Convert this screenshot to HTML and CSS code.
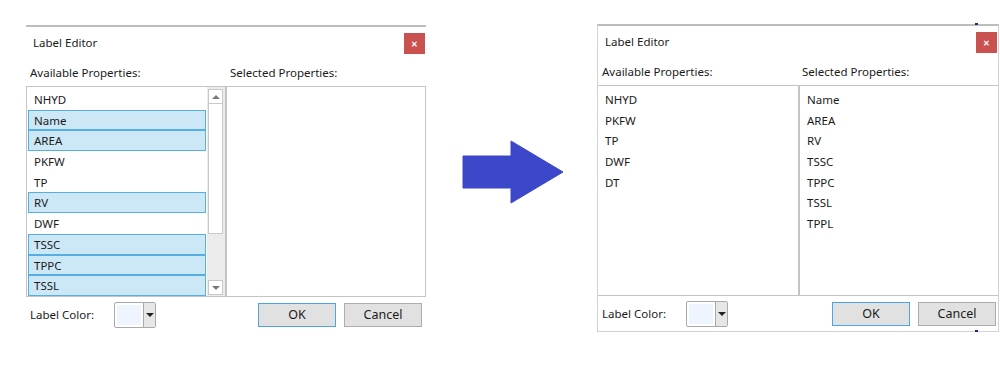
FILE: index.html
```html
<!DOCTYPE html>
<html lang="en">
<head>
  <meta charset="UTF-8">
  <title>Label Editor</title>
  <link rel="stylesheet" href="styles.css">
</head>
<body>
  <div class="page">

    <div class="dialog before">
      <div class="titlebar">
        <span class="title">Label Editor</span>
        <span class="close">&#x2715;</span>
      </div>
      <div class="captions">
        <div>Available Properties:</div>
        <div>Selected Properties:</div>
      </div>
      <div class="lists">
        <div class="list with-scroll">
          <div class="items">
            <div class="item">NHYD</div>
            <div class="item sel">Name</div>
            <div class="item sel">AREA</div>
            <div class="item">PKFW</div>
            <div class="item">TP</div>
            <div class="item sel">RV</div>
            <div class="item">DWF</div>
            <div class="item sel">TSSC</div>
            <div class="item sel">TPPC</div>
            <div class="item sel">TSSL</div>
          </div>
          <div class="scrollbar">
            <div class="sbtn up"></div>
            <div class="thumb"></div>
            <div class="track"></div>
            <div class="sbtn down"></div>
          </div>
        </div>
        <div class="list"></div>
      </div>
      <div class="footer">
        <span class="lbl">Label Color:</span>
        <div class="combo">
          <div class="swatch"></div>
          <div class="drop"></div>
        </div>
        <div class="btn ok">OK</div>
        <div class="btn">Cancel</div>
      </div>
    </div>

    <svg class="arrow" width="102" height="64" viewBox="0 0 102 64">
      <path d="M1 16 H49 V1 L101 32 L49 63 V48 H1 Z" fill="#3c47c9" stroke="#3c47c9" stroke-width="1" stroke-linejoin="round"/>
    </svg>

    <div class="dialog after">
      <span class="mark top"></span>
      <span class="mark bottom"></span>
      <div class="titlebar">
        <span class="title">Label Editor</span>
        <span class="close">&#x2715;</span>
      </div>
      <div class="captions">
        <div>Available Properties:</div>
        <div>Selected Properties:</div>
      </div>
      <div class="lists">
        <div class="list">
          <div class="items">
            <div class="item">NHYD</div>
            <div class="item">PKFW</div>
            <div class="item">TP</div>
            <div class="item">DWF</div>
            <div class="item">DT</div>
          </div>
        </div>
        <div class="list">
          <div class="items">
            <div class="item">Name</div>
            <div class="item">AREA</div>
            <div class="item">RV</div>
            <div class="item">TSSC</div>
            <div class="item">TPPC</div>
            <div class="item">TSSL</div>
            <div class="item">TPPL</div>
          </div>
        </div>
      </div>
      <div class="footer">
        <span class="lbl">Label Color:</span>
        <div class="combo">
          <div class="swatch"></div>
          <div class="drop"></div>
        </div>
        <div class="btn ok">OK</div>
        <div class="btn">Cancel</div>
      </div>
    </div>

  </div>
</body>
</html>
```

FILE: styles.css
```css
html, body {
  margin: 0;
  padding: 0;
  background: #fff;
}

*,
*:before,
*:after {
  box-sizing: border-box;
}

body {
  font-family: "Segoe UI", "Noto Sans", sans-serif;
  font-size: 11.5px;
  color: #1a1a1a;
}

.page {
  display: flex;
  align-items: flex-start;
  width: 1000px;
  height: 379px;
}

.dialog {
  display: flex;
  flex-direction: column;
  border-top: 2px solid #bdbdbd;
  background: #fff;
}

.before {
  width: 400px;
  margin: 25px 0 0 26px;
}

.after {
  position: relative;
  width: 402px;
  height: 308px;
  margin: 24px 0 0 33px;
  border: 1px solid #d2d2d2;
  border-top: 2px solid #bdbdbd;
}

.titlebar {
  display: flex;
  justify-content: space-between;
  align-items: flex-start;
  height: 33px;
  padding: 6px 1px 0 7px;
}

.title {
  line-height: 20px;
}

.close {
  width: 21px;
  height: 21px;
  background: #c9514f;
  color: #fff;
  font-size: 8px;
  font-weight: bold;
  line-height: 21px;
  text-align: center;
}

.captions {
  display: grid;
  grid-template-columns: 200px 200px;
  height: 26px;
  line-height: 26px;
}

.captions div {
  padding-left: 4px;
}

.lists {
  display: grid;
  grid-template-columns: 200px 200px;
  height: 211px;
}

.after .lists {
  grid-template-columns: 201px 199px;
}

.list {
  border: 1px solid #c4c4c4;
  background: #fff;
}

.after .list:first-child {
  border-left: none;
}

.after .list:last-child {
  border-right: none;
}

.items {
  padding: 2px 1px 0 1px;
}

.after .items {
  padding-top: 3px;
}

.item {
  height: 20.7px;
  line-height: 19px;
  padding-left: 5px;
  border: 1px solid transparent;
}

.after .item {
  padding-left: 5px;
}

.item.sel {
  background: #cce8f7;
  border-color: #56aee3;
}

.with-scroll {
  display: flex;
}

.with-scroll .items {
  flex: 1;
}

.scrollbar {
  display: flex;
  flex-direction: column;
  width: 18px;
  padding: 2px 2px 1px 1px;
  background: #ebebeb;
}

.sbtn {
  height: 15px;
  border: 1px solid #c8c8c8;
  background: #fff;
  display: flex;
  align-items: center;
  justify-content: center;
}

.sbtn:before {
  content: "";
  border-left: 4px solid transparent;
  border-right: 4px solid transparent;
}

.up:before {
  border-bottom: 4px solid #7a7a7a;
}

.down:before {
  border-top: 4px solid #7a7a7a;
}

.thumb {
  height: 130px;
  border: 1px solid #c8c8c8;
  border-top: none;
  background: #fff;
}

.track {
  flex: 1;
}

.footer {
  display: flex;
  align-items: center;
  height: 35px;
  padding: 0 4px;
}

.lbl {
  width: 84px;
}

.combo {
  display: flex;
  width: 42px;
  height: 26px;
  margin-top: 1px;
  border: 1px solid #a9a9a9;
  border-radius: 2px;
}

.swatch {
  width: 24px;
  margin: 2px;
  background: #eef5ff;
}

.drop {
  flex: 1;
  border-left: 1px solid #a9a9a9;
  background: #e6e6e6;
  display: flex;
  align-items: center;
  justify-content: center;
}

.drop:before {
  content: "";
  border-left: 4px solid transparent;
  border-right: 4px solid transparent;
  border-top: 4px solid #222;
}

.btn {
  width: 78px;
  height: 24px;
  line-height: 21px;
  text-align: center;
  font-size: 12.5px;
  background: #e1e1e1;
  border: 1px solid #adadad;
  margin-left: 8px;
}

.ok {
  margin-left: auto;
  border-color: #4ea4e0;
}

.before .ok {
  margin-left: 102px;
}

.after .footer {
  padding-right: 2px;
}

.arrow {
  margin: 140px 0 0 36px;
}

.mark {
  position: absolute;
  left: 377px;
  width: 3px;
  height: 2px;
  background: #1e2a8a;
}

.mark.top {
  top: -3px;
}

.mark.bottom {
  bottom: -1px;
}
```
